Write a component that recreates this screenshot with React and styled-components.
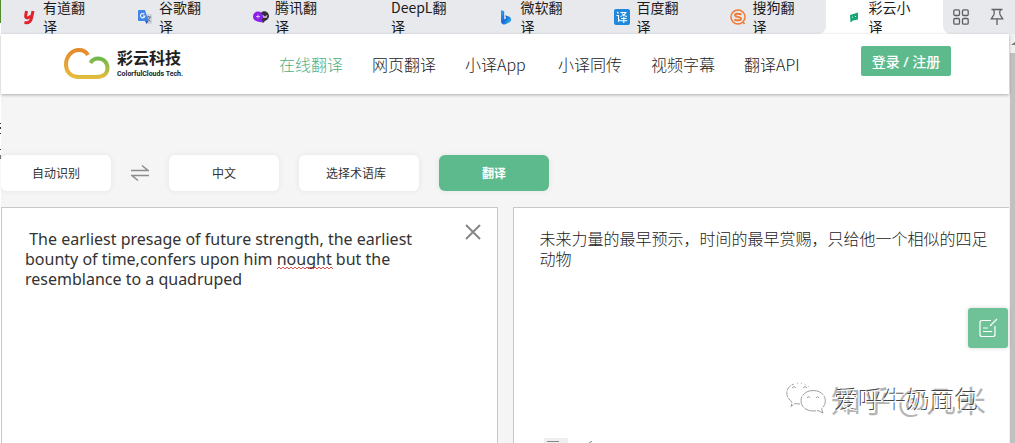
import React, { useState } from "react";
import styled, { createGlobalStyle } from "styled-components";

const GlobalStyle = createGlobalStyle`
  * { box-sizing: border-box; }
  html, body, #root { height: 100%; margin: 0; }
  body {
    overflow: hidden;
    background: #f5f5f5;
    color: #333;
    font-family: "Noto Sans", "Noto Sans CJK SC", sans-serif;
    font-weight: 400;
  }
  button, select, textarea { font-family: inherit; border: 0; margin: 0; padding: 0; }
  a { color: inherit; text-decoration: none; }
`;

const Screen = styled.div`
  position: relative;
  display: flex;
  flex-direction: column;
  height: 100vh;
  padding-left: 1px;
  background: #fff;
`;

const EdgeMark = styled.span`
  position: absolute;
  left: 0;
  top: ${(p) => p.$top}px;
  width: 1px;
  height: ${(p) => p.$size}px;
  background: ${(p) => p.$fill};
`;

const TabStrip = styled.nav`
  display: flex;
  flex: none;
  height: 34px;
  background: #fff;
  overflow: hidden;
`;

const TabGroup = styled.div`
  display: flex;
  align-items: center;
  gap: 52px;
  height: 34px;
  padding: 0 32px 0 20px;
  background: #e8e9ed;
  border-bottom-right-radius: 8px;
`;

const Tab = styled.a`
  display: flex;
  flex: none;
  align-items: center;
  gap: 6px;
  color: #1b1b1b;
  font-family: "Noto Sans CJK SC", sans-serif;
  font-size: 14px;
  line-height: 19px;
  padding-left: ${(p) => (p.$active ? "20px" : "0")};

  svg { width: 16px; height: 16px; flex: none; }
`;

const TabTools = styled.div`
  display: flex;
  flex: 1;
  align-items: center;
  gap: 20px;
  padding-left: 10px;
  margin-left: 33px;
  background: #e8e9ed;
  border-bottom-left-radius: 8px;
`;

const ToolButton = styled.button`
  display: flex;
  background: none;
  color: #5c5e62;
  svg { width: 16px; height: 18px; }
`;

const Viewport = styled.div`
  display: flex;
  flex: 1;
  min-height: 0;
`;

const Page = styled.div`
  position: relative;
  display: flex;
  flex: 1;
  flex-direction: column;
  min-width: 0;
  background: #f5f5f5;
`;

const ScrollTrack = styled.div`
  display: flex;
  flex: none;
  flex-direction: column;
  align-items: flex-end;
  gap: 8px;
  width: 6px;
  padding-top: 8px;
  background: #f1f1f1;
  svg { width: 4px; height: 3px; }
`;

const ScrollThumb = styled.div`
  flex: 1;
  width: 5px;
  background: #c1c1c1;
`;

const Header = styled.header`
  display: flex;
  flex: none;
  align-items: center;
  height: 60px;
  padding: 0 58px 0 62px;
  background: #fff;
  box-shadow: 0 1px 3px rgba(0, 0, 0, 0.3);
`;

const Brand = styled.a`
  display: flex;
  align-items: center;
  gap: 7px;
  color: #222;
  > svg { width: 47px; height: 34px; }
`;

const BrandName = styled.span`
  display: flex;
  flex-direction: column;
  width: 66px;
  font-size: 16px;
  font-weight: 700;
  line-height: 20px;
  white-space: nowrap;

  small {
    font-family: Roboto, sans-serif;
    font-size: 7px;
    line-height: 12px;
  }
`;

const MainNav = styled.nav`
  display: flex;
  gap: 29px;
  margin-left: 96px;
`;

const NavLink = styled.a`
  width: 64px;
  color: ${(p) => (p.$active ? "#4fb081" : "#222")};
  font-family: "Noto Sans CJK SC", sans-serif;
  font-size: 16px;
  font-weight: 300;
  line-height: 24px;
  white-space: nowrap;
`;

const LoginButton = styled.button`
  height: 30px;
  width: 90px;
  margin: 0 0 6px auto;
  border-radius: 2px;
  background: #5dba8c;
  color: #fff;
  font-size: 14px;
  font-weight: 500;
  white-space: nowrap;
`;

const Toolbar = styled.div`
  display: flex;
  flex: none;
  align-items: center;
  margin-top: 61px;
`;

const Picker = styled.select`
  appearance: none;
  width: ${(p) => (p.$wide ? 120 : 110)}px;
  height: 36px;
  margin-right: 20px;
  padding-right: ${(p) => (p.$wide ? 6 : 0)}px;
  border-radius: 6px;
  background: #fff;
  box-shadow: 0 0 6px rgba(0, 0, 0, 0.07);
  color: #333;
  font-size: 12px;
  text-align: center;
  text-align-last: center;
`;

const SwapButton = styled.button`
  display: flex;
  margin-right: 20px;
  background: none;
  color: #8c8c8c;
  svg { width: 18px; height: 18px; }
`;

const TranslateButton = styled.button`
  width: 110px;
  height: 36px;
  border-radius: 6px;
  background: #5dba8c;
  box-shadow: 0 0 6px rgba(0, 0, 0, 0.07);
  color: #fff;
  font-size: 12px;
  font-weight: 700;
`;

const Panels = styled.main`
  display: grid;
  flex: 1;
  grid-template-columns: 1fr 1fr;
  gap: 15px;
  min-height: 0;
  margin-top: 16px;
`;

const SourcePanel = styled.section`
  position: relative;
  display: flex;
  border: 1px solid #c8c8c8;
  border-bottom: 0;
  background: #fff;
`;

const SourceText = styled.textarea`
  flex: 1;
  min-width: 0;
  padding: 21px 68px 0 23px;
  overflow: hidden;
  resize: none;
  outline: 0;
  background: transparent;
  color: #333;
  font-size: 16px;
  line-height: 20px;
`;

const Squiggle = styled.svg`
  position: absolute;
  left: 275px;
  top: 58px;
  width: 57px;
  height: 4px;
`;

const ClearButton = styled.button`
  position: absolute;
  top: 15px;
  right: 15px;
  display: flex;
  background: none;
  color: #888;
  svg { width: 18px; height: 18px; }
`;

const ResultPanel = styled.section`
  display: flex;
  flex-direction: column;
  justify-content: space-between;
  padding: 20px 18px 0 26px;
  border: 1px solid #c8c8c8;
  border-width: 1px 0 0 1px;
  background: #fff;
`;

const ResultText = styled.p`
  margin: 0;
  color: #222;
  font-family: "Noto Sans CJK SC", sans-serif;
  font-size: 16px;
  font-weight: 300;
  line-height: 20px;
`;

const ResultTools = styled.div`
  display: flex;
  height: 5px;
  padding-left: 4px;
  svg { width: 60px; height: 5px; }
`;

const FeedbackButton = styled.button`
  position: absolute;
  top: 274px;
  right: 1px;
  display: flex;
  align-items: center;
  justify-content: center;
  width: 40px;
  height: 40px;
  border-radius: 3px;
  background: #6fc298;
  box-shadow: 0 0 5px rgba(0, 0, 0, 0.15);
  color: #fff;
  svg { width: 20px; height: 22px; }
`;

const Watermark = styled.div`
  position: absolute;
  right: 20px;
  bottom: 26px;
  display: flex;
  align-items: center;
  gap: 4px;
  pointer-events: none;
  > svg { width: 42px; height: 34px; }
`;

const MarkText = styled.span`
  display: grid;
  width: 158px;
  font-family: "Noto Sans CJK SC", sans-serif;
  white-space: nowrap;
`;

const MarkLayer = styled.span`
  grid-area: 1 / 1;
  padding-left: ${(p) => (p.$front ? 4 : 0)}px;
  font-size: ${(p) => (p.$front ? 24 : 30)}px;
  line-height: 36px;
  font-weight: ${(p) => (p.$front ? 300 : 400)};
  color: ${(p) => (p.$front ? "#fff" : "#b4b4b4")};
  text-shadow: ${(p) => (p.$front ? "-1px -1px 0 #444" : "none")};
`;

const YoudaoIcon = () => (
  <svg viewBox="0 0 16 16" fill="none" stroke="#e0222c" strokeWidth="3">
    <path d="M5.5 2 4.7 6.5Q4.3 9.2 6.5 9 9 8.7 10 6.5M12 2 10.4 9.5Q9.4 14 5 13.8L3.5 13.6" />
  </svg>
);

const GoogleIcon = () => (
  <svg viewBox="0 0 16 16">
    <path d="M7 5h7q1 0 1 1v8q0 1-1 1H10z" fill="#cfd4dc" />
    <path d="M9 8h5M11.5 7v1M13 8q-.5 3-3 4M10.5 9.5q1 2 3 3" stroke="#64748b" fill="none" />
    <path d="M2 1h6l3.5 11H2q-1 0-1-1V2q0-1 1-1z" fill="#4285e8" />
    <path d="m8 12h3.5L9.5 15z" fill="#2a56c6" />
    <path d="M7.3 5.2A2.2 2.2 0 1 0 7.8 7H5.8" fill="none" stroke="#fff" strokeWidth="1.1" />
  </svg>
);

const TencentIcon = () => (
  <svg viewBox="0 0 16 16">
    <circle cx="11.3" cy="7" r="4.7" fill="#303038" />
    <path d="M7 11h6l-3 3z" fill="#303038" />
    <circle cx="5" cy="7.5" r="5" fill="#8b20e6" />
    <path d="M4 12q4 2 6 1L8 9z" fill="#8b20e6" />
    <path d="M3 7.5h4M5 5.5v4M10 6l1 3 1-2 1 2 1-3" stroke="#ead8fb" fill="none" strokeWidth=".8" />
  </svg>
);

const BingIcon = () => (
  <svg viewBox="0 0 16 16">
    <defs>
      <linearGradient id="bing" x1="0" y1="0" x2="1" y2="1">
        <stop offset="0" stopColor="#35a8f0" />
        <stop offset=".5" stopColor="#1767d8" />
        <stop offset="1" stopColor="#35c8ee" />
      </linearGradient>
    </defs>
    <path d="M3 1 6.200 2.200v8.300l2-1.200L7 6.300l3 1q3.500 1 3.200 3.700-.2 1.300-1.500 2.200L7.500 15.300Q6 16 4.500 15 3 14 3 12.500z" fill="url(#bing)" />
  </svg>
);

const BaiduIcon = () => (
  <svg viewBox="0 0 16 16">
    <rect width="16" height="16" rx="2" fill="#1e88dd" />
    <path d="M3 3l1.5 1.5M2.5 6.5h2V12L6 10.8M6.5 3.5H12Q10.5 6.5 6.5 7.5M8 4.5q2 2.5 5 3M7 9.5h5.5M6.3 11.7h7M9.8 7.7V14" fill="none" stroke="#fff" strokeWidth="1.1" />
  </svg>
);

const SogouIcon = () => (
  <svg viewBox="0 0 16 16" fill="none" stroke="#ef7b35">
    <circle cx="8" cy="8" r="7" strokeWidth="1.5" />
    <path d="M11.5 5.3Q5 3.7 5 6.3C5 8.5 11 7.2 11 9.7 11 12 6.5 11.2 4.3 10.7" strokeWidth="2" />
    <path d="m13 13 1.5 2" strokeWidth="1.5" />
  </svg>
);

const CaiyunIcon = () => (
  <svg viewBox="0 0 16 16">
    <path d="m4 6 8-2.5v7L7 11.5l-2.5 2z" fill="#17a673" />
    <path d="M6 8.2h1M9 7.5h1" stroke="#d8f6e9" />
  </svg>
);

const GridIcon = () => (
  <svg viewBox="0 0 16 18" fill="none" stroke="currentColor" strokeWidth="1.3">
    <rect x=".8" y="1.8" width="5.7" height="5.7" rx="1.2" />
    <rect x="9.5" y="1.8" width="5.7" height="5.7" rx="1.2" />
    <rect x=".8" y="10.5" width="5.7" height="5.7" rx="1.2" />
    <rect x="9.5" y="10.5" width="5.7" height="5.7" rx="1.2" />
  </svg>
);

const PinIcon = () => (
  <svg viewBox="0 0 16 18" fill="none" stroke="currentColor" strokeWidth="1.3">
    <path d="M2.500 1.500h11M4.500 1.500Q6 4.500 5 6.500L2.300 10.800h11.400L11 6.500Q10 4.500 11.500 1.500M8 10.800V17" />
  </svg>
);

const CloudLogo = () => (
  <svg viewBox="0 0 47 34" fill="none" strokeWidth="4">
    <defs>
      <linearGradient id="warm" x1="0" y1="0" x2="0" y2="1">
        <stop offset="0" stopColor="#e58a2c" />
        <stop offset="1" stopColor="#e7ba3c" />
      </linearGradient>
      <linearGradient id="fresh" x1="0" y1="0" x2="0" y2="1">
        <stop offset="0" stopColor="#72b84c" />
        <stop offset=".55" stopColor="#a6bd43" />
        <stop offset="1" stopColor="#e3bb3d" />
      </linearGradient>
    </defs>
    <path d="M16 30C7 30 3 24 3 17.500 3 9 9 3 16 3q6 0 9 5" stroke="url(#warm)" />
    <path d="M27.500 16Q30 11.500 35 11.500c6 0 9.500 4.500 9.500 9.500S41 30 34 30H14" stroke="url(#fresh)" />
  </svg>
);

const SwapIcon = () => (
  <svg viewBox="0 0 18 18" fill="none" stroke="currentColor" strokeWidth="1.5">
    <path d="M0 6.500h17L11 1.500M18 11.500H1l6 5" />
  </svg>
);

const CloseIcon = () => (
  <svg viewBox="0 0 18 18" fill="none" stroke="currentColor" strokeWidth="2">
    <path d="m2 2 14 14M16 2 2 16" />
  </svg>
);

const NoteIcon = () => (
  <svg viewBox="0 0 20 22" fill="none" stroke="currentColor" strokeWidth="1.2">
    <path d="M13 3.500H4Q2 3.500 2 5.500v12q0 2 2 2h11q2 0 2-2V9M19 2l-7 7M5 11h5M5 14.500h9" />
  </svg>
);

const ChatIcon = () => (
  <svg viewBox="0 0 42 34" fill="#fff" stroke="#888" strokeWidth=".8">
    <path d="M15 22 10 21.500 6 24.500 7 20C-1 14 1 5 8 2.500" strokeDasharray="6 1" />
    <path d="M8 2.500Q17-1 24 5" strokeDasharray="1 3" />
    <path d="M28 8.500c-6 0-12 4-12 10 0 8 8 12 17 10l5 2.500-1.500-4C44 20 40 8.500 28 8.500z" strokeDasharray="12 1" />
    <path d="M7 6q2-3 4 0M18 6q2-3 4 0M22 16q2-3 3 0M31 16q2-3 3 0" />
  </svg>
);

const tabs = [
  ["有道翻", YoudaoIcon],
  ["谷歌翻", GoogleIcon],
  ["腾讯翻", TencentIcon],
  ["DeepL翻", null],
  ["微软翻", BingIcon],
  ["百度翻", BaiduIcon],
  ["搜狗翻", SogouIcon],
];

const navItems = ["在线翻译", "网页翻译", "小译App", "小译同传", "视频字幕", "翻译API"];

const edgeMarks = [
  [0, 23, "#4f8a2b"],
  [123, 1, "#333"],
  [127, 2, "#333"],
  [133, 1, "#333"],
  [149, 1, "#333"],
  [155, 4, "#777"],
];

export default function App() {
  const [source, setSource] = useState(
    " The earliest presage of future strength, the earliest bounty of time,confers upon him nought but the resemblance to a quadruped"
  );

  return (
    <Screen>
      <GlobalStyle />
      {edgeMarks.map(([top, size, fill]) => (
        <EdgeMark key={top} $top={top} $size={size} $fill={fill} />
      ))}
      <TabStrip>
        <TabGroup>
          {tabs.map(([name, Icon]) => (
            <Tab href="#" key={name}>
              {Icon ? <Icon /> : <svg />}
              <span>{name}<br />译</span>
            </Tab>
          ))}
        </TabGroup>
        <Tab href="#" $active>
          <CaiyunIcon />
          <span>彩云小<br />译</span>
        </Tab>
        <TabTools>
          <ToolButton aria-label="标签页"><GridIcon /></ToolButton>
          <ToolButton aria-label="固定"><PinIcon /></ToolButton>
        </TabTools>
      </TabStrip>
      <Viewport>
        <Page>
          <Header>
            <Brand href="#">
              <CloudLogo />
              <BrandName>彩云科技<small>ColorfulClouds Tech.</small></BrandName>
            </Brand>
            <MainNav>
              {navItems.map((item, i) => (
                <NavLink href="#" key={item} $active={i === 0}>{item}</NavLink>
              ))}
            </MainNav>
            <LoginButton>登录 / 注册</LoginButton>
          </Header>
          <Toolbar>
            <Picker aria-label="源语言"><option>自动识别</option></Picker>
            <SwapButton aria-label="交换语言"><SwapIcon /></SwapButton>
            <Picker aria-label="目标语言"><option>中文</option></Picker>
            <Picker aria-label="术语库" $wide><option>选择术语库</option></Picker>
            <TranslateButton>翻译</TranslateButton>
          </Toolbar>
          <Panels>
            <SourcePanel>
              <SourceText
                aria-label="原文"
                spellCheck={false}
                value={source}
                onChange={(e) => setSource(e.target.value)}
              />
              {source.includes("nought") && (
                <Squiggle viewBox="0 0 57 4" fill="none" stroke="#d9534f">
                  <path d="M0 3l2-2 2 2 2-2 2 2 2-2 2 2 2-2 2 2 2-2 2 2 2-2 2 2 2-2 2 2 2-2 2 2 2-2 2 2 2-2 2 2 2-2 2 2 2-2 2 2 2-2 2 2 2-2 2 2" />
                </Squiggle>
              )}
              <ClearButton aria-label="清空" onClick={() => setSource("")}><CloseIcon /></ClearButton>
            </SourcePanel>
            <ResultPanel>
              <ResultText>未来力量的最早预示，时间的最早赏赐，只给他一个相似的四足动物</ResultText>
              <ResultTools>
                <svg viewBox="0 0 60 5" fill="none">
                  <path d="M0 0h24v5H0z" fill="#eee" />
                  <path d="M3 3.500h12M45 4.500l3-1" stroke="#888" />
                </svg>
              </ResultTools>
            </ResultPanel>
          </Panels>
          <FeedbackButton aria-label="反馈"><NoteIcon /></FeedbackButton>
          <Watermark>
            <ChatIcon />
            <MarkText>
              <MarkLayer>知乎 @几米</MarkLayer>
              <MarkLayer $front>爱呼牛奶面包</MarkLayer>
            </MarkText>
          </Watermark>
        </Page>
        <ScrollTrack>
          <svg viewBox="0 0 4 3"><path d="M0 3 4 0v3z" fill="#777" /></svg>
          <ScrollThumb />
        </ScrollTrack>
      </Viewport>
    </Screen>
  );
}
